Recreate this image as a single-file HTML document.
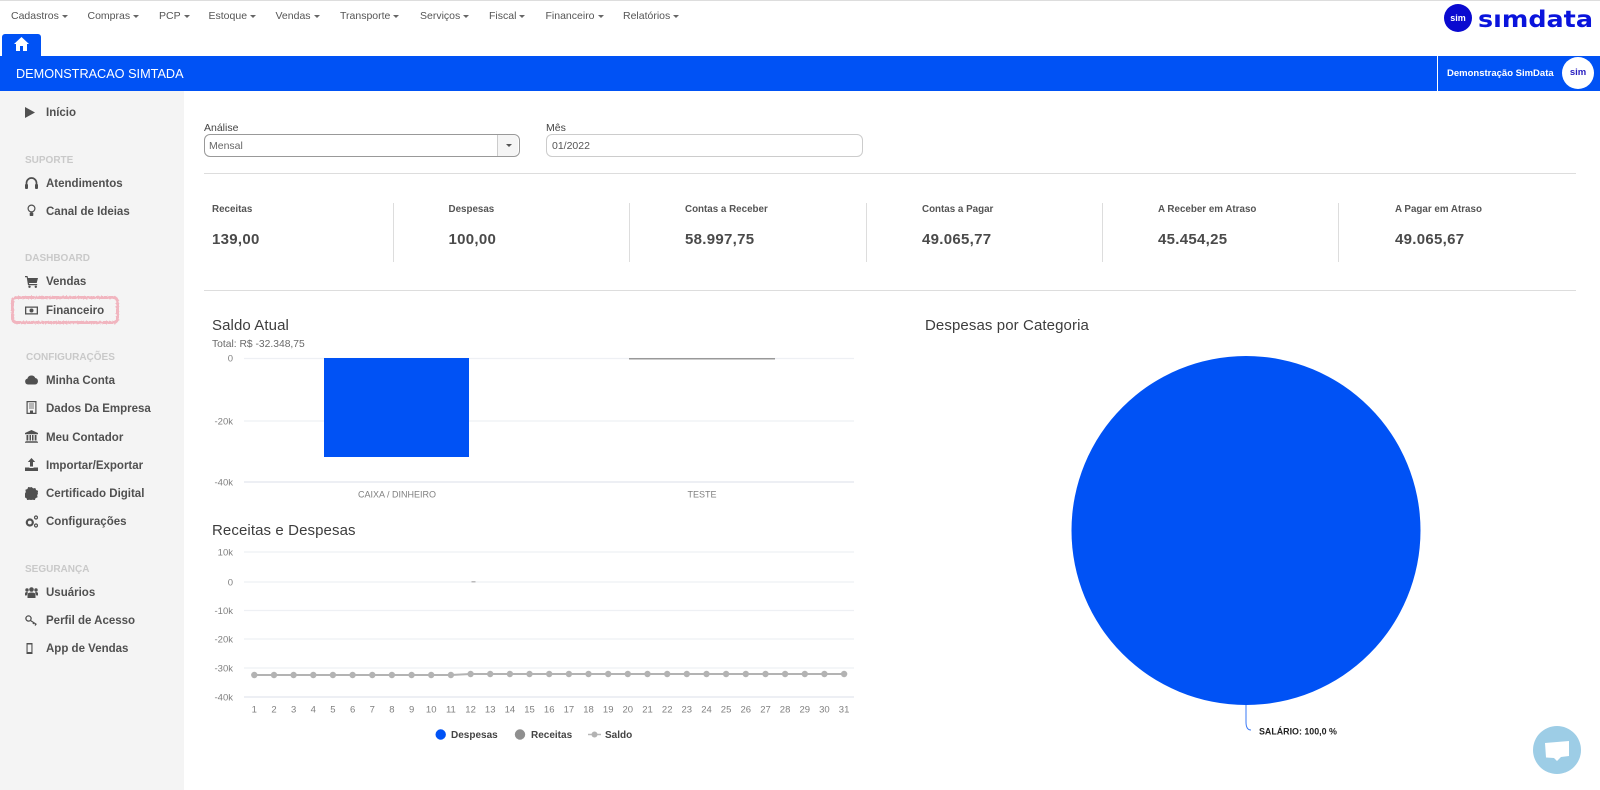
<!DOCTYPE html>
<html lang="pt-BR"><head><meta charset="utf-8"><title>SimData</title>
<style>
html,body{margin:0;padding:0;background:#fff;width:1600px;height:790px;overflow:hidden;font-family:"Liberation Sans",Arial,sans-serif}
.a{position:absolute;white-space:nowrap}
.n{font-size:10.5px;color:#555;top:8px;line-height:16px}
.n i{display:inline-block;width:0;height:0;border-left:3px solid transparent;border-right:3px solid transparent;border-top:3.5px solid #666;margin-left:3px;vertical-align:1px}
.s{left:46px;font-size:11.5px;font-weight:bold;color:#505050;line-height:16px}
.h{font-size:10px;font-weight:bold;color:#c9c9c9;line-height:14px}
.l{font-size:9.8px;font-weight:bold;color:#555;line-height:14px}
.v{font-size:15px;font-weight:bold;color:#4a4a4a;line-height:20px;letter-spacing:.3px}
.d{width:1px;top:203px;height:59px;background:#ddd}
.t{font-size:15px;color:#3d3d3d;line-height:20px;letter-spacing:.1px}
svg.i{position:absolute;left:25px;width:13px;height:13px;fill:#505050}
</style></head><body>
<div class="a" style="left:0;top:0;width:1600px;height:1px;background:#ddd"></div>

<div class="a n" style="left:11px">Cadastros<i></i></div>
<div class="a n" style="left:87.5px">Compras<i></i></div>
<div class="a n" style="left:159px">PCP<i></i></div>
<div class="a n" style="left:208.5px">Estoque<i></i></div>
<div class="a n" style="left:275.5px">Vendas<i></i></div>
<div class="a n" style="left:340px">Transporte<i></i></div>
<div class="a n" style="left:420px">Serviços<i></i></div>
<div class="a n" style="left:489px">Fiscal<i></i></div>
<div class="a n" style="left:545.5px">Financeiro<i></i></div>
<div class="a n" style="left:623px">Relatórios<i></i></div>

<svg class="a" style="left:1440px;top:0" width="160" height="40">
<circle cx="18" cy="18" r="14" fill="#0a0ad0"/>
<text x="18" y="21" text-anchor="middle" font-family="Liberation Sans" font-weight="bold" font-size="9" fill="#fff">sim</text>
<text x="38" y="27" font-family="DejaVu Sans" font-weight="bold" font-size="23" fill="#0a14dc" textLength="115" lengthAdjust="spacingAndGlyphs">sımdata</text>
</svg>

<div class="a" style="left:2px;top:34px;width:39px;height:22px;background:#0052f5;border-radius:3px 3px 0 0"></div>
<svg class="a" style="left:14px;top:37px" width="15" height="14" viewBox="0 0 15 14"><path fill="#fff" d="M7.5 0L15 7h-2v7H9V9H6v5H2V7H0z"/></svg>

<div class="a" style="left:0;top:56px;width:1600px;height:35px;background:#0052f5"></div>
<div class="a" style="left:16px;top:66px;font-size:12.7px;line-height:16px;color:#fff">DEMONSTRACAO SIMTADA</div>
<div class="a" style="left:1437px;top:56px;width:1px;height:35px;background:#fff"></div>
<div class="a" style="left:1447px;top:66px;font-size:9.5px;font-weight:bold;line-height:16px;color:#fff">Demonstração SimData</div>
<div class="a" style="left:1562px;top:57px;width:32px;height:32px;border-radius:50%;background:#fff;color:#2a20c0;font-size:9.5px;font-weight:bold;text-align:center;line-height:32px">sim</div>

<div class="a" style="left:0;top:91px;width:184px;height:699px;background:#f4f4f4"></div>

<svg class="i" style="top:106px" viewBox="0 0 13 13"><path d="M0 1l10 5.500L0 12z"/></svg>
<div class="a s" style="top:105px">Início</div>
<div class="a h" style="left:25px;top:154px">SUPORTE</div>
<svg class="i" style="top:177px" viewBox="0 0 13 13"><path fill="none" stroke="#505050" stroke-width="1.7" d="M1.500 8V6a5 5 0 0 1 10 0v2"/><rect x="0" y="7" width="3" height="5" rx="1"/><rect x="10" y="7" width="3" height="5" rx="1"/></svg>
<div class="a s" style="top:176px">Atendimentos</div>
<svg class="i" style="top:204px" viewBox="0 0 13 13"><circle cx="6.500" cy="4.500" r="3.400" fill="none" stroke="#505050" stroke-width="1.200"/><rect x="4.700" y="8.500" width="3.600" height="3.500" rx=".8"/></svg>
<div class="a s" style="top:204px">Canal de Ideias</div>
<div class="a h" style="left:25px;top:252px">DASHBOARD</div>
<svg class="i" style="top:275px" viewBox="0 0 13 13"><path d="M0 1h2.500l.5 2h10l-1.300 5H4l.2 1h8v1.200H3L1.700 2.200H0z"/><circle cx="4.500" cy="11.800" r="1.200"/><circle cx="10.800" cy="11.800" r="1.200"/></svg>
<div class="a s" style="top:274px">Vendas</div>
<svg class="i" style="top:303.500px" viewBox="0 0 13 13"><path fill-rule="evenodd" d="M0 2.500h13v8H0zM1.300 3.800v5.400h10.400V3.800z"/><circle cx="6.500" cy="6.500" r="2"/></svg>
<div class="a s" style="top:303px">Financeiro</div>
<svg class="a" style="left:8px;top:293px" width="116" height="34"><defs><filter id="r" x="-5%" y="-20%" width="110%" height="140%"><feTurbulence type="fractalNoise" baseFrequency=".6" numOctaves="2" seed="3"/><feDisplacementMap in="SourceGraphic" scale="2.500"/></filter></defs><rect x="4.500" y="4.500" width="105" height="25" rx="4" fill="none" stroke="#f0a0ae" stroke-opacity=".75" stroke-width="3" filter="url(#r)"/></svg>

<div class="a h" style="left:26px;top:351px">CONFIGURAÇÕES</div>
<svg class="i" style="top:373px" viewBox="0 0 13 13"><path d="M3 11.500a3 3 0 0 1-.6-5.900A4.200 4.200 0 0 1 10.300 5a3.300 3.300 0 0 1-.2 6.500z"/></svg>
<div class="a s" style="top:373px">Minha Conta</div>
<svg class="i" style="top:401px" viewBox="0 0 13 13"><path fill-rule="evenodd" d="M1.500 0h10v13h-10zM2.700 1.200V11.800H5V9.500h3v2.300h2.300V1.200z"/><path fill="#777" d="M4 2.500h5v1H4zM4 4.500h5v1H4zM4 6.500h5v1H4z"/></svg>
<div class="a s" style="top:401px">Dados Da Empresa</div>
<svg class="i" style="top:430px" viewBox="0 0 13 13"><path d="M6.500 0L13 3v1.200H0V3zM1.500 5h1.800v5.500H1.500zM4.500 5h1.500v5.500H4.500zM7 5h1.500v5.500H7zM9.700 5h1.800v5.500H9.700zM.5 11h12v.8H.5zM0 12.200h13v.8H0z"/></svg>
<div class="a s" style="top:430px">Meu Contador</div>
<svg class="i" style="top:458px" viewBox="0 0 13 13"><path d="M6.500 0l3.700 4H8v4.500H5V4H2.800zM0 9.500h4.500v.5h4V9.500H13V13H0z"/></svg>
<div class="a s" style="top:458px">Importar/Exportar</div>
<svg class="i" style="top:486.500px" viewBox="0 0 13 13"><path d="M6.500 0l1.700 1.400 2.100-.4.800 2 2 .8-.4 2.200L13 6.500l-.8 1.700.4 2.100-2 .8-.8 2-2.100-.4-1.700.3-1.700-.3-2.100.4-.8-2-2-.8.4-2.100L0 6.500l.8-1.500-.4-2.200 2-.8.8-2 2.100.4z"/></svg>
<div class="a s" style="top:486px">Certificado Digital</div>
<svg class="i" style="top:514.500px" viewBox="0 0 13 13"><circle cx="4.800" cy="7.500" r="3" fill="none" stroke="#505050" stroke-width="2.200"/><circle cx="11" cy="2.500" r="1.500" fill="none" stroke="#505050" stroke-width="1.200"/><circle cx="11" cy="10.500" r="1.500" fill="none" stroke="#505050" stroke-width="1.200"/></svg>
<div class="a s" style="top:514px">Configurações</div>

<div class="a h" style="left:25px;top:563px">SEGURANÇA</div>
<svg class="i" style="top:586px" viewBox="0 0 13 13"><circle cx="6.500" cy="3.500" r="2.300"/><circle cx="2" cy="4" r="1.700"/><circle cx="11" cy="4" r="1.700"/><path d="M2.500 12V8.500Q2.500 6.500 6.500 6.500T10.500 8.500V12zM0 9.500V7.500Q0 6 2 6L3 6.500 1.600 9.500zM13 9.500V7.500Q13 6 11 6L10 6.500l1.400 3z"/></svg>
<div class="a s" style="top:585px">Usuários</div>
<svg class="i" style="top:614px" viewBox="0 0 13 13"><circle cx="3.500" cy="4.500" r="2.600" fill="none" stroke="#505050" stroke-width="1.300"/><path fill="none" stroke="#505050" stroke-width="1.300" d="M5.500 6.500l6 4M9 8.500l-1 1.500M11 10l-1 1.500"/></svg>
<div class="a s" style="top:613px">Perfil de Acesso</div>
<svg class="i" style="top:642px" viewBox="0 0 13 13"><path fill-rule="evenodd" d="M1.500 1h6v11h-6zM2.600 2.500v7.500h3.800V2.500z"/></svg>
<div class="a s" style="top:641px">App de Vendas</div>

<div class="a" style="left:204px;top:121px;font-size:10.5px;line-height:14px;color:#444">Análise</div>
<div class="a" style="left:204px;top:134px;width:314px;height:21px;border:1px solid #999;border-radius:6px"></div>
<div class="a" style="left:497px;top:135px;width:1px;height:21px;background:#ccc"></div>
<div class="a" style="left:498px;top:135px;width:20px;height:21px;background:#f5f5f5;border-radius:0 5px 5px 0"></div>
<div class="a" style="left:506px;top:144px;width:0;height:0;border-left:3px solid transparent;border-right:3px solid transparent;border-top:3.500px solid #555"></div>
<div class="a" style="left:209px;top:139px;font-size:10.5px;line-height:14px;color:#666">Mensal</div>
<div class="a" style="left:546px;top:121px;font-size:10.5px;line-height:14px;color:#444">Mês</div>
<div class="a" style="left:546px;top:134px;width:315px;height:21px;border:1px solid #ccc;border-radius:6px"></div>
<div class="a" style="left:552px;top:139px;font-size:10.5px;line-height:14px;color:#555">01/2022</div>
<div class="a" style="left:204px;top:173px;width:1372px;height:1px;background:#ddd"></div>

<div class="a l" style="left:212px;top:201.500px;margin-top:1px">Receitas</div><div class="a v" style="left:212px;top:230px">139,00</div>
<div class="a d" style="left:393px"></div>
<div class="a l" style="left:448.5px;top:202.500px">Despesas</div><div class="a v" style="left:448.5px;top:230px">100,00</div>
<div class="a d" style="left:629px"></div>
<div class="a l" style="left:685px;top:202.500px">Contas a Receber</div><div class="a v" style="left:685px;top:230px">58.997,75</div>
<div class="a d" style="left:866px"></div>
<div class="a l" style="left:922px;top:202.500px">Contas a Pagar</div><div class="a v" style="left:922px;top:230px">49.065,77</div>
<div class="a d" style="left:1102px"></div>
<div class="a l" style="left:1158px;top:202.500px">A Receber em Atraso</div><div class="a v" style="left:1158px;top:230px">45.454,25</div>
<div class="a d" style="left:1338px"></div>
<div class="a l" style="left:1395px;top:202.500px">A Pagar em Atraso</div><div class="a v" style="left:1395px;top:230px">49.065,67</div>
<div class="a" style="left:204px;top:290px;width:1372px;height:1px;background:#ddd"></div>

<div class="a t" style="left:212px;top:316px">Saldo Atual</div>
<div class="a" style="left:212px;top:338px;font-size:10.3px;line-height:14px;color:#6a6a6a">Total: R$ -32.348,75</div>
<div class="a t" style="left:212px;top:521px">Receitas e Despesas</div>
<div class="a t" style="left:925px;top:316px">Despesas por Categoria</div>

<svg class="a" style="left:0;top:0" width="1600" height="790" font-family="Liberation Sans" font-size="9.5" fill="#808080">
<g stroke="#eef0f4" stroke-width="1.2">
<path d="M244 358.500H854M244 421H854"/><path stroke="#e2e5ee" d="M244 482H854"/>
<path d="M244 552H854M244 582H854M244 610.500H854M244 639H854M244 668H854"/><path stroke="#e2e5ee" d="M244 697H854"/>
</g>
<rect x="324" y="358" width="145" height="99" fill="#0052f5"/>
<rect x="629" y="358" width="146" height="1.500" fill="#999"/>
<g text-anchor="end">
<text x="233" y="361.500">0</text><text x="233" y="424.500">-20k</text><text x="233" y="485.500">-40k</text>
<text x="233" y="555.500">10k</text><text x="233" y="585.500">0</text><text x="233" y="614">-10k</text><text x="233" y="642.500">-20k</text><text x="233" y="671.500">-30k</text><text x="233" y="700.500">-40k</text>
</g>
<g text-anchor="middle">
<text x="397" y="497.500" font-size="9">CAIXA / DINHEIRO</text><text x="702" y="497.500" font-size="9">TESTE</text>
<text x="254.300" y="712.500">1</text><text x="274" y="712.500">2</text><text x="293.600" y="712.500">3</text><text x="313.300" y="712.500">4</text><text x="332.900" y="712.500">5</text><text x="352.600" y="712.500">6</text><text x="372.300" y="712.500">7</text><text x="391.900" y="712.500">8</text><text x="411.600" y="712.500">9</text><text x="431.200" y="712.500">10</text><text x="450.900" y="712.500">11</text><text x="470.600" y="712.500">12</text><text x="490.200" y="712.500">13</text><text x="509.900" y="712.500">14</text><text x="529.500" y="712.500">15</text><text x="549.200" y="712.500">16</text><text x="568.900" y="712.500">17</text><text x="588.500" y="712.500">18</text><text x="608.200" y="712.500">19</text><text x="627.800" y="712.500">20</text><text x="647.500" y="712.500">21</text><text x="667.200" y="712.500">22</text><text x="686.800" y="712.500">23</text><text x="706.500" y="712.500">24</text><text x="726.100" y="712.500">25</text><text x="745.800" y="712.500">26</text><text x="765.500" y="712.500">27</text><text x="785.100" y="712.500">28</text><text x="804.800" y="712.500">29</text><text x="824.400" y="712.500">30</text><text x="844.100" y="712.500">31</text>
</g>
<rect x="471.500" y="581" width="4" height="1.500" fill="#bbb"/>
<path d="M254.300 675H450.900L470.600 674H844.100" fill="none" stroke="#b3b3b3" stroke-width="2"/>
<g fill="#b3b3b3">
<circle cx="254.300" cy="675" r="3.200"/><circle cx="274" cy="675" r="3.200"/><circle cx="293.600" cy="675" r="3.200"/><circle cx="313.300" cy="675" r="3.200"/><circle cx="332.900" cy="675" r="3.200"/><circle cx="352.600" cy="675" r="3.200"/><circle cx="372.300" cy="675" r="3.200"/><circle cx="391.900" cy="675" r="3.200"/><circle cx="411.600" cy="675" r="3.200"/><circle cx="431.200" cy="675" r="3.200"/><circle cx="450.900" cy="675" r="3.200"/><circle cx="470.600" cy="674" r="3.200"/><circle cx="490.200" cy="674" r="3.200"/><circle cx="509.900" cy="674" r="3.200"/><circle cx="529.500" cy="674" r="3.200"/><circle cx="549.200" cy="674" r="3.200"/><circle cx="568.900" cy="674" r="3.200"/><circle cx="588.500" cy="674" r="3.200"/><circle cx="608.200" cy="674" r="3.200"/><circle cx="627.800" cy="674" r="3.200"/><circle cx="647.500" cy="674" r="3.200"/><circle cx="667.200" cy="674" r="3.200"/><circle cx="686.800" cy="674" r="3.200"/><circle cx="706.500" cy="674" r="3.200"/><circle cx="726.100" cy="674" r="3.200"/><circle cx="745.800" cy="674" r="3.200"/><circle cx="765.500" cy="674" r="3.200"/><circle cx="785.100" cy="674" r="3.200"/><circle cx="804.800" cy="674" r="3.200"/><circle cx="824.400" cy="674" r="3.200"/><circle cx="844.100" cy="674" r="3.200"/>
</g>
<circle cx="440.700" cy="734.500" r="5.200" fill="#0052f5"/>
<text x="451" y="738" font-size="10" font-weight="bold" fill="#444">Despesas</text>
<circle cx="520" cy="734.500" r="5.200" fill="#8f8f8f"/>
<text x="531" y="738" font-size="10" font-weight="bold" fill="#444">Receitas</text>
<path d="M588 734.500H601" stroke="#b8b8b8" stroke-width="1.500"/><circle cx="594.500" cy="734.500" r="3" fill="#b3b3b3"/>
<text x="605" y="738" font-size="10" font-weight="bold" fill="#444">Saldo</text>

<circle cx="1246" cy="530.500" r="174.500" fill="#0052f5"/>
<path d="M1246 705V722Q1246 730 1251 730" fill="none" stroke="#3a78f5" stroke-width="1"/>
<text x="1259" y="734.500" font-size="8.900" font-weight="bold" fill="#222">SALÁRIO: 100,0 %</text>

<circle cx="1557" cy="750" r="24" fill="#9dcde6"/>
<path d="M1545 743L1569 741V756L1561 757L1557 761L1554 758L1546 757.500Z" fill="#fff"/>
</svg>
</body></html>
